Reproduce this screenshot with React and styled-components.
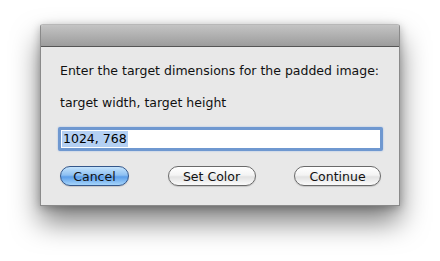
import React from "react";
import styled, { createGlobalStyle } from "styled-components";

const Global = createGlobalStyle`
  html, body { margin: 0; padding: 0; background: #ffffff; }
  body { width: 440px; height: 261px; overflow: hidden; font-family: "DejaVu Sans", "Liberation Sans", sans-serif; }
`;

const Stage = styled.div`
  padding: 24px 0 0 40px;
`;

const Window = styled.div`
  width: 360px;
  height: 182px;
  box-sizing: border-box;
  border: 1px solid #8a8a8a;
  border-top-color: #b8b8b8;
  border-radius: 3px 3px 0 0;
  background: #e8e8e8;
  display: flex;
  flex-direction: column;
  box-shadow: 0 16px 28px rgba(0, 0, 0, 0.5), 0 2px 8px rgba(0, 0, 0, 0.25);
`;

const TitleBar = styled.div`
  height: 21px;
  flex: none;
  background: linear-gradient(#c4c4c4, #9c9c9c);
  border-bottom: 1px solid #555;
  border-radius: 2px 2px 0 0;
`;

const Body = styled.div`
  display: flex;
  flex-direction: column;
  padding: 16px 16px 0 19px;
`;

const Label = styled.div`
  font-size: 12.5px;
  color: #111;
  line-height: 16px;
  margin-bottom: ${(p) => p.$mb || 0}px;
`;

const Field = styled.div`
  margin: 0 0 0 -2px;
  height: 24px;
  width: 325px;
  box-sizing: border-box;
  border: 3px solid #6f98d0;
  border-radius: 2px;
  box-shadow: 0 0 2px #9dbbe6;
  background: #fff;
  display: flex;
  align-items: stretch;
  padding: 1px 0 1px 1px;
`;

const Selected = styled.span`
  background: #b4d0f3;
  font-family: "DejaVu Sans", sans-serif;
  font-size: 12.5px;
  line-height: 16px;
  display: flex;
  align-items: center;
  color: #000;
  padding: 0 1px;
`;

const Buttons = styled.div`
  display: flex;
  justify-content: space-between;
  align-items: center;
  margin-top: 15px;
  padding-right: 2px;
`;

const Button = styled.div`
  width: ${(p) => p.$w}px;
  height: 20px;
  box-sizing: border-box;
  border-radius: 10px;
  border: 1px solid ${(p) => (p.$primary ? "#35578a" : "#6a6a6a")};
  background: ${(p) =>
    p.$primary
      ? "linear-gradient(#c4e3fc 0%, #8ec0f2 45%, #5c9ee9 55%, #a6d5fb 100%)"
      : "linear-gradient(#ffffff 0%, #f4f4f4 45%, #e2e2e2 55%, #fbfbfb 100%)"};
  display: flex;
  align-items: center;
  justify-content: center;
  font-size: 12.5px;
  color: #111;
  box-shadow: 0 1px 1px rgba(0,0,0,0.15);
`;

export default function App() {
  return (
    <>
      <Global />
      <Stage>
        <Window>
          <TitleBar />
          <Body>
            <Label $mb={16}>Enter the target dimensions for the padded image:</Label>
            <Label $mb={16}>target width, target height</Label>
            <Field>
              <Selected>1024, 768</Selected>
            </Field>
            <Buttons>
              <Button $primary $w={69}>Cancel</Button>
              <Button $w={88}>Set Color</Button>
              <Button $w={87}>Continue</Button>
            </Buttons>
          </Body>
        </Window>
      </Stage>
    </>
  );
}
